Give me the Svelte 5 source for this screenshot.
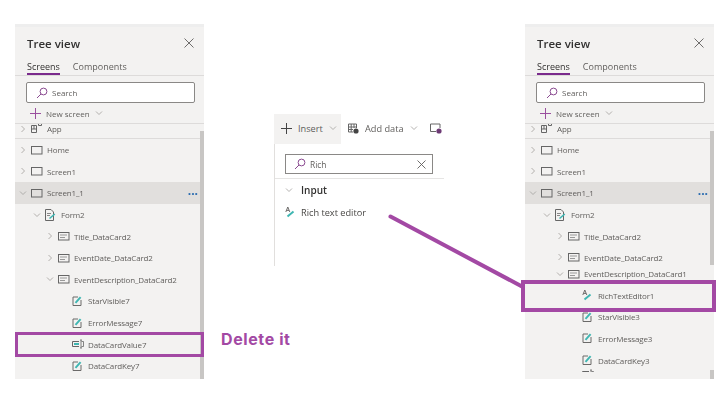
<script>
  const leftRows = [
    { label: "App", icon: "app", level: 0, chev: "right", cls: "first" },
    { label: "Home", icon: "screen", level: 0, chev: "right" },
    { label: "Screen1", icon: "screen", level: 0, chev: "right" },
    { label: "Screen1_1", icon: "screen", level: 0, chev: "down", cls: "selected" },
    { label: "Form2", icon: "form", level: 1, chev: "down" },
    { label: "Title_DataCard2", icon: "card", level: 2, chev: "right" },
    { label: "EventDate_DataCard2", icon: "card", level: 2, chev: "right" },
    { label: "EventDescription_DataCard2", icon: "card", level: 2, chev: "down" },
    { label: "StarVisible7", icon: "edit", level: 3 },
    { label: "ErrorMessage7", icon: "edit", level: 3 },
    { label: "DataCardValue7", icon: "input", level: 3, cls: "boxed" },
    { label: "DataCardKey7", icon: "edit", level: 3 },
  ];
  const rightRows = [
    { label: "App", icon: "app", level: 0, chev: "right", cls: "first" },
    { label: "Home", icon: "screen", level: 0, chev: "right" },
    { label: "Screen1", icon: "screen", level: 0, chev: "right" },
    { label: "Screen1_1", icon: "screen", level: 0, chev: "down", cls: "selected" },
    { label: "Form2", icon: "form", level: 1, chev: "down" },
    { label: "Title_DataCard2", icon: "card", level: 2, chev: "right" },
    { label: "EventDate_DataCard2", icon: "card", level: 2, chev: "right", cls: "short" },
    { label: "EventDescription_DataCard1", icon: "card", level: 2, chev: "down", cls: "tight" },
    { label: "RichTextEditor1", icon: "rte", level: 3 },
    { label: "StarVisible3", icon: "edit", level: 3 },
    { label: "ErrorMessage3", icon: "edit", level: 3 },
    { label: "DataCardKey3", icon: "edit", level: 3 },
    { label: "DataCardValue3", icon: "input", level: 3, cls: "cut" },
  ];
</script>

{#snippet chevron(dir)}
  <svg class="chev" width="8" height="8" viewBox="0 0 8 8">
    {#if dir === "right"}
      <path d="M2.5 1 L5.5 4 L2.5 7" />
    {:else}
      <path d="M1 2.5 L4 5.5 L7 2.5" />
    {/if}
  </svg>
{/snippet}

{#snippet magnifier()}
  <svg width="12" height="12" viewBox="0 0 12 12" class="mag">
    <circle cx="7.5" cy="4.5" r="3.4" />
    <path d="M5 7 L1 11" />
  </svg>
{/snippet}

{#snippet editIcon()}
  <svg width="10" height="10" viewBox="0 0 10 10" fill="none">
    <path d="M6 1 H1 V9.5 H9 V4" stroke="#6b6a69" />
    <path d="M3.5 6.8 L8.6 1.2" stroke="#3fb6b2" stroke-width="2" />
  </svg>
{/snippet}

{#snippet rteIcon()}
  <svg width="11" height="12" viewBox="0 0 11 12" fill="none">
    <path d="M0.8 6 L2.8 1 L4.8 6 M1.6 4.4 H4" stroke="#605e5c" stroke-width="0.9" />
    <path d="M2.5 10.5 L8.5 5.5" stroke="#3fb6b2" stroke-width="2" />
  </svg>
{/snippet}

{#snippet treeIcon(kind)}
  {#if kind === "app"}
    <svg width="11" height="11" viewBox="0 0 11 11" fill="none" stroke="#666">
      <path d="M0.5 3.5 H5.5 V10.5 H0.5 Z M0.5 7 H5.5 M3 3.5 V7 M7.5 0.5 V3.5 H10.5 V0.5" />
    </svg>
  {:else if kind === "screen"}
    <svg width="12" height="10" viewBox="0 0 12 10" fill="none" stroke="#666">
      <rect x="0.5" y="1.5" width="10.5" height="7.5" />
    </svg>
  {:else if kind === "form"}
    <svg width="11" height="12" viewBox="0 0 11 12" fill="none">
      <path d="M0.5 0.5 H6 L8.5 3 V11.5 H0.5 Z" stroke="#666" />
      <path d="M2 4.5 H6 M2 6.5 H5" stroke="#888" />
      <path d="M4.5 9.5 L9.8 5" stroke="#3fb6b2" stroke-width="1.6" />
    </svg>
  {:else if kind === "card"}
    <svg width="12" height="10" viewBox="0 0 12 10" fill="none" stroke="#666">
      <rect x="0.5" y="1.5" width="10.5" height="7.5" />
      <path d="M2 4 H9 M2 6.5 H7" stroke="#999" />
    </svg>
  {:else if kind === "edit"}
    {@render editIcon()}
  {:else if kind === "input"}
    <svg width="12" height="10" viewBox="0 0 12 10" fill="none">
      <path d="M7 2.5 H0.5 V7.5 H7" stroke="#666" />
      <path d="M2 5 H7" stroke="#3fb6b2" stroke-width="2" />
      <path d="M8 1 H10 M9 1 V9 M8 9 H10 M9.5 2.5 H11.5 V7.5 H9.5" stroke="#666" stroke-width="0.8" />
    </svg>
  {:else}
    {@render rteIcon()}
  {/if}
{/snippet}

{#snippet panel(rows)}
  <div class="top-strip"></div>
  <div class="title-row">
    <span class="title">Tree view</span>
    <svg width="10" height="10" viewBox="0 0 10 10" class="close"><path d="M0.5 0.5 L9.5 9.5 M9.5 0.5 L0.5 9.5" /></svg>
  </div>
  <div class="tabs">
    <span class="tab active">Screens</span>
    <span class="tab">Components</span>
  </div>
  <div class="search">
    {@render magnifier()}
    <span>Search</span>
  </div>
  <div class="new-screen">
    <svg width="11" height="11" viewBox="0 0 11 11" class="plus"><path d="M5.5 0 V11 M0 5.5 H11" /></svg>
    <span>New screen</span>
    {@render chevron("down")}
  </div>
  <div class="tree">
    {#each rows as row}
      <div class="row {row.cls ?? ''} lvl{row.level}">
        <span class="chev-slot">
          {#if row.chev}{@render chevron(row.chev)}{/if}
        </span>
        <span class="icon-slot">{@render treeIcon(row.icon)}</span>
        <span class="label">{row.label}</span>
        {#if row.cls === "selected"}<span class="dots">···</span>{/if}
      </div>
    {/each}
  </div>
{/snippet}

<div class="page">
  <aside class="panel left">
    <div class="soft">{@render panel(leftRows)}</div>
    <div class="thumb thumb-left"></div>
    <div class="box-left"></div>
  </aside>

  <main class="middle">
    <div class="insert-pane soft">
      <div class="toolbar">
        <div class="tool insert">
          <svg width="11" height="11" viewBox="0 0 11 11" class="plus dark"><path d="M5.5 0 V11 M0 5.5 H11" /></svg>
          <span>Insert</span>
          {@render chevron("down")}
        </div>
        <div class="tool add-data">
          <svg width="11" height="11" viewBox="0 0 11 11" fill="none">
            <path d="M0.5 1 H8.5 V5 M0.5 1 V9 H5 M0.5 4 H8.5 M0.5 6.5 H5 M3.2 1 V9 M6 1 V5" stroke="#666" />
            <circle cx="8" cy="8" r="2.6" fill="#444" />
          </svg>
          <span>Add data</span>
          {@render chevron("down")}
        </div>
        <div class="tool newscreen">
          <svg width="12" height="11" viewBox="0 0 12 11" fill="none">
            <path d="M6 8.5 H0.5 V1 H10 V5" stroke="#666" />
            <circle cx="9" cy="8" r="2.6" fill="#6d3a75" />
          </svg>
        </div>
      </div>
      <div class="menu">
        <div class="menu-search">
          {@render magnifier()}
          <span>Rich</span>
          <svg width="9" height="9" viewBox="0 0 9 9" class="close clear"><path d="M0.5 0.5 L8.5 8.5 M8.5 0.5 L0.5 8.5" /></svg>
        </div>
        <div class="group">
          {@render chevron("down")}
          <span>Input</span>
        </div>
        <div class="item">
          {@render rteIcon()}
          <span>Rich text editor</span>
        </div>
      </div>
    </div>
    <div class="delete-note">Delete it</div>
  </main>

  <aside class="panel right">
    <div class="soft">{@render panel(rightRows)}</div>
    <div class="thumb thumb-right-a"></div>
    <div class="thumb thumb-right-b"></div>
    <div class="box-right"></div>
  </aside>

  <svg class="connector" width="728" height="420" viewBox="0 0 728 420">
    <path d="M390.5 216.5 L522 286.5" />
  </svg>
</div>

<style>
  :global(body) {
    margin: 0;
    background: #fff;
  }
  .page {
    position: relative;
    width: 728px;
    height: 420px;
    overflow: hidden;
    display: flex;
    align-items: flex-start;
    padding: 24px 0 0 15px;
    box-sizing: border-box;
    font-family: "Open Sans", sans-serif;
    color: #605e5c;
  }
  .soft {
    filter: blur(0.35px);
  }
  .panel {
    position: relative;
    width: 189px;
    height: 355px;
    flex: none;
    background: #f3f2f1;
  }
  .top-strip {
    height: 3px;
    background: #eeeeee;
  }
  .title-row {
    height: 31px;
    padding: 1px 10px 0 12px;
    display: flex;
    align-items: center;
    justify-content: space-between;
    box-sizing: border-box;
  }
  .title {
    font-size: 11.5px;
    font-weight: 600;
    color: #323130;
  }
  .close path {
    stroke: #605e5c;
    stroke-width: 0.9;
    fill: none;
  }
  .tabs {
    height: 18px;
    padding-left: 12px;
    display: flex;
    gap: 13px;
    border-bottom: 1px solid #dddbda;
    box-sizing: border-box;
  }
  .tab {
    font-size: 9px;
    line-height: 17px;
    height: 17px;
    box-sizing: border-box;
    color: #605e5c;
  }
  .tab.active {
    color: #323130;
    border-bottom: 2px solid #7a2a8c;
  }
  .search {
    margin: 6px 9px 0 11px;
    height: 21px;
    background: #fff;
    border: 1px solid #8a8886;
    border-radius: 2px;
    box-sizing: border-box;
    display: flex;
    align-items: center;
    padding-left: 9px;
    gap: 4px;
    font-size: 8px;
  }
  .mag {
    fill: none;
    stroke: #8a4a90;
    flex: none;
  }
  .new-screen {
    height: 21px;
    padding-left: 15px;
    display: flex;
    align-items: center;
    gap: 5px;
    font-size: 8px;
    border-bottom: 1px solid #dddbda;
    box-sizing: border-box;
  }
  .plus path {
    stroke: #9b4f9f;
    stroke-width: 1;
    fill: none;
  }
  .plus.dark path {
    stroke: #444;
  }
  .chev path {
    stroke: #a19f9d;
    stroke-width: 0.8;
    fill: none;
  }
  .tree {
    height: 256px;
    overflow: hidden;
  }
  .row {
    height: 21.6px;
    display: flex;
    align-items: center;
    position: relative;
    font-size: 8px;
    box-sizing: border-box;
  }
  .row.first {
    height: 15px;
    border-bottom: 1px solid #dddbda;
    align-items: flex-end;
    padding-bottom: 5px;
  }
  .row.first .label {
    line-height: 9px;
  }
  .row.selected {
    background: #e1dfdd;
  }
  .row.short {
    height: 21px;
  }
  .row.tight {
    height: 16.5px;
    padding-bottom: 5px;
  }
  .row.cut {
    height: 3px;
    overflow: hidden;
    align-items: flex-start;
    margin-top: -2px;
  }
  .lvl0 { padding-left: 4px; }
  .lvl1 { padding-left: 18px; }
  .lvl2 { padding-left: 31px; }
  .lvl3 { padding-left: 45px; }
  .chev-slot {
    width: 12px;
    flex: none;
    display: flex;
    align-items: center;
  }
  .icon-slot {
    width: 16px;
    flex: none;
    display: flex;
    align-items: center;
  }
  .label {
    white-space: nowrap;
    letter-spacing: -0.15px;
  }
  .dots {
    position: absolute;
    right: 6px;
    top: 3px;
    color: #2b6cb0;
    font-size: 12px;
    font-weight: 700;
  }
  .thumb {
    position: absolute;
    left: 185px;
    width: 4px;
    background: #c8c6c4;
  }
  .thumb-left { top: 107px; bottom: 0; }
  .thumb-right-a { top: 107px; height: 134px; }
  .thumb-right-b { top: 346px; bottom: 0; }
  .box-left {
    position: absolute;
    left: 0;
    top: 308px;
    width: 189px;
    height: 25px;
    border: 3px solid #a349a4;
    box-sizing: border-box;
  }
  .box-right {
    position: absolute;
    left: -4px;
    top: 256px;
    width: 195px;
    height: 32px;
    border: 4.5px solid #a349a4;
    box-sizing: border-box;
  }
  .middle {
    width: 321px;
    flex: none;
    height: 355px;
    display: flex;
    flex-direction: column;
    padding-top: 90px;
    padding-left: 17px;
    box-sizing: border-box;
  }
  .insert-pane {
    width: 170px;
    height: 152px;
    font-size: 9.2px;
    margin-left: 53px;
  }
  .toolbar {
    height: 30px;
    display: flex;
    align-items: center;
  }
  .tool {
    display: flex;
    align-items: center;
    gap: 5px;
    height: 30px;
    padding-bottom: 2px;
    box-sizing: border-box;
  }
  .insert {
    width: 67px;
    background: #f3f2f1;
    padding-left: 7px;
    gap: 6px;
  }
  .add-data {
    margin-left: 7px;
    width: 82px;
    gap: 6px;
  }
  .menu {
    height: 122px;
    padding-top: 10px;
    border-left: 1px solid #e1dfdd;
    box-sizing: border-box;
  }
  .menu-search {
    margin: 0 10px;
    height: 20px;
    border: 1px solid #8a8886;
    box-sizing: border-box;
    display: flex;
    align-items: center;
    padding: 0 6px 0 8px;
    gap: 4px;
    font-size: 8.4px;
    width: 148px;
  }
  .clear {
    margin-left: auto;
  }
  .group {
    margin-top: 4px;
    border-top: 1px solid #e6e5e4;
    height: 22px;
    display: flex;
    align-items: center;
    padding-left: 10px;
    gap: 8px;
    font-size: 10px;
    font-weight: 600;
    color: #323130;
  }
  .item {
    height: 20px;
    margin-top: 1px;
    display: flex;
    align-items: center;
    padding-left: 10px;
    gap: 5px;
    font-size: 9.2px;
    color: #484644;
  }
  .delete-note {
    margin-top: 63px;
    font-size: 16px;
    letter-spacing: 0.6px;
    font-weight: 700;
    color: #a349a4;
    font-family: "Inter", sans-serif;
  }
  .connector {
    position: absolute;
    left: 0;
    top: 0;
    pointer-events: none;
  }
  .connector path {
    stroke: #a349a4;
    stroke-width: 4;
    stroke-linecap: round;
    fill: none;
  }
</style>
